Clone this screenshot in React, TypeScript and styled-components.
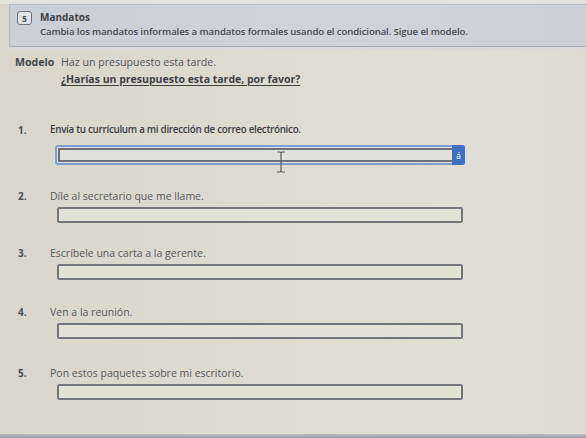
import React from "react";
import styled, { createGlobalStyle } from "styled-components";

const Global = createGlobalStyle`
  html, body { margin: 0; padding: 0; }
  body {
    width: 586px; height: 438px; overflow: hidden;
    background: #dddbcf;
    font-family: "Open Sans", "Noto Sans", sans-serif;
    color: #4b4e56;
  }
`;

const Page = styled.div`
  position: relative;
  width: 586px;
  height: 438px;
  display: flex;
  flex-direction: column;
  background: linear-gradient(90deg, #d9d7cb 0%, #dedcd1 45%, #e0dfd5 80%, #dcdbd1 100%);
  overflow: hidden;
`;

const TopStrip = styled.div`
  height: 4px;
  background: #e4e4df;
  flex: none;
`;

const Header = styled.div`
  margin-left: 9px;
  height: 43px;
  flex: none;
  background: linear-gradient(90deg, #cbcfd8 0%, #d0d3dc 60%, #ccd0d9 100%);
  border-top: 1px solid #b9bdc6;
  border-left: 1px solid #b4b8c1;
  border-bottom: 1px solid #a9adb7;
  display: flex;
  align-items: flex-start;
  padding: 5px 0 0 7px;
  box-sizing: border-box;
  gap: 8px;
`;

const Badge = styled.div`
  width: 15px;
  height: 14px;
  box-sizing: border-box;
  border: 1px solid #6c6f77;
  border-radius: 3px;
  background: #e2e3e6;
  font-size: 8px;
  font-weight: 700;
  color: #45474e;
  display: flex;
  align-items: center;
  justify-content: center;
  margin-top: 1px;
`;

const HeaderText = styled.div`
  display: flex;
  flex-direction: column;
`;

const Title = styled.div`
  font-size: 10px;
  font-weight: 700;
  line-height: 14px;
  color: #3e4047;
`;

const Subtitle = styled.div`
  font-size: 9.6px;
  font-weight: 600;
  line-height: 14px;
  margin-top: 1px;
  color: #464951;
  letter-spacing: -0.1px;
`;

const HeaderShade = styled.div`
  height: 4px;
  margin-left: 9px;
  flex: none;
  background: linear-gradient(180deg, #d6d8dc, #dcdbd2);
`;

const Model = styled.div`
  display: grid;
  grid-template-columns: 46px auto;
  padding-left: 15px;
  margin-top: 3px;
  font-size: 10.6px;
  line-height: 17px;
`;

const ModelLabel = styled.div`
  font-weight: 700;
  color: #44464d;
`;

const ModelLines = styled.div`
  display: flex;
  flex-direction: column;
`;

const ModelPrompt = styled.div`
  color: #50535b;
`;

const ModelAnswer = styled.div`
  font-weight: 700;
  font-size: 10.5px;
  color: #3f4148;
  text-decoration: underline;
  text-underline-offset: 2px;
`;

const List = styled.div`
  display: flex;
  flex-direction: column;
`;

const Item = styled.div<{ $top: number }>`
  display: grid;
  grid-template-columns: 32px 420px;
  padding-left: 18px;
  margin-top: ${(p) => p.$top}px;
`;

const Num = styled.div`
  font-size: 10px;
  font-weight: 700;
  line-height: 14px;
  color: #4a4c53;
`;

const Body = styled.div`
  display: flex;
  flex-direction: column;
`;

const Prompt = styled.div<{ $strong?: boolean }>`
  font-size: ${(p) => (p.$strong ? "9.8px" : "10.5px")};
  line-height: 14px;
  font-weight: ${(p) => (p.$strong ? 600 : 400)};
  color: ${(p) => (p.$strong ? "#3a3d45" : "#555860")};
  letter-spacing: ${(p) => (p.$strong ? "-0.28px" : "0")};
`;

const Field = styled.div`
  margin: 4px 0 0 7px;
  width: 406px;
  height: 16px;
  box-sizing: border-box;
  border: 2px solid #74767d;
  border-radius: 2px;
  background: #e3e2d9;
`;

const FocusWrap = styled.div`
  margin: 8px 0 0 5px;
  width: 410px;
  height: 20px;
  box-sizing: border-box;
  border: 2px solid #7d9fd4;
  border-radius: 3px;
  background: #dfe1e2;
  display: flex;
  padding: 1px 0 1px 1px;
`;

const FocusInput = styled.div`
  flex: 1;
  box-sizing: border-box;
  border: 2px solid #6d7078;
  border-right: none;
  background: #e1e1dc;
`;

const AccentButton = styled.div`
  width: 13px;
  background: #3d6fc2;
  color: #e8eefa;
  font-size: 8px;
  font-weight: 600;
  display: flex;
  align-items: center;
  justify-content: center;
  margin: -3px -2px -3px 0;
  border-radius: 0 3px 3px 0;
`;

const Cursor = styled.svg`
  position: absolute;
  left: 276px;
  top: 151px;
`;

const BottomStrip = styled.div`
  position: absolute;
  left: 0;
  right: 0;
  bottom: 0;
  height: 4px;
  background: linear-gradient(180deg, #b7bbc0, #9ca1a9);
`;

const items = [
  { n: "1.", text: "Envía tu currículum a mi dirección de correo electrónico.", top: 35, focused: true },
  { n: "2.", text: "Díle al secretario que me llame.", top: 24 },
  { n: "3.", text: "Escríbele una carta a la gerente.", top: 23 },
  { n: "4.", text: "Ven a la reunión.", top: 25 },
  { n: "5.", text: "Pon estos paquetes sobre mi escritorio.", top: 27 },
];

export default function App() {
  return (
    <Page>
      <Global />
      <TopStrip />
      <Header>
        <Badge>5</Badge>
        <HeaderText>
          <Title>Mandatos</Title>
          <Subtitle>
            Cambia los mandatos informales a mandatos formales usando el condicional. Sigue el modelo.
          </Subtitle>
        </HeaderText>
      </Header>
      <HeaderShade />
      <Model>
        <ModelLabel>Modelo</ModelLabel>
        <ModelLines>
          <ModelPrompt>Haz un presupuesto esta tarde.</ModelPrompt>
          <ModelAnswer>¿Harías un presupuesto esta tarde, por favor?</ModelAnswer>
        </ModelLines>
      </Model>
      <List>
        {items.map((it) => (
          <Item key={it.n} $top={it.top}>
            <Num>{it.n}</Num>
            <Body>
              <Prompt $strong={it.focused}>{it.text}</Prompt>
              {it.focused ? (
                <FocusWrap>
                  <FocusInput />
                  <AccentButton>á</AccentButton>
                </FocusWrap>
              ) : (
                <Field />
              )}
            </Body>
          </Item>
        ))}
      </List>
      <Cursor width="10" height="22" viewBox="0 0 10 22">
        <path d="M1 1 H4 L5 2 L6 1 H9 M5 2 V20 M1 21 H4 L5 20 L6 21 H9" stroke="#5a5c62" strokeWidth="1.2" fill="none" />
      </Cursor>
      <BottomStrip />
    </Page>
  );
}
